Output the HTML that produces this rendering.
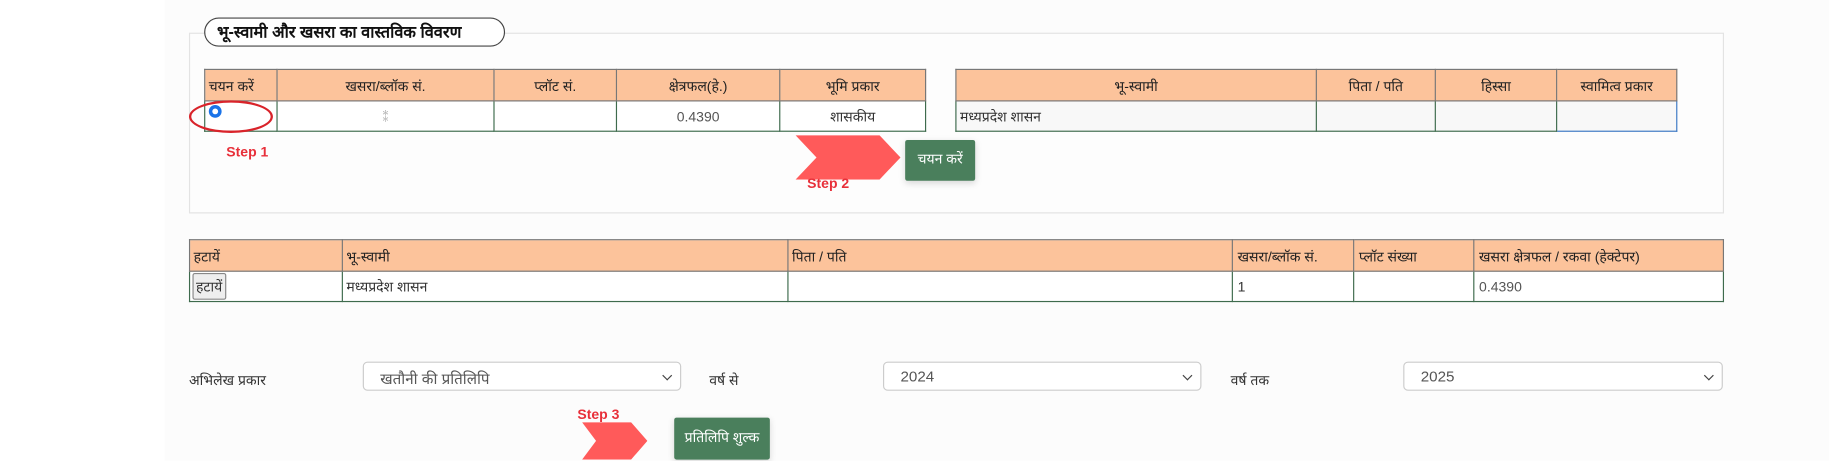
<!DOCTYPE html>
<html><head><meta charset="utf-8"><style>
*{box-sizing:border-box;margin:0;padding:0}
body{width:1829px;height:460px;background:#fff;position:relative;overflow:hidden;font-family:"Liberation Sans","Noto Sans CJK SC",sans-serif;font-size:12px;color:#333}
#w{position:absolute;left:0;top:0;width:1568px;height:395px;transform:scale(1.16645);transform-origin:0 0}
.bg{position:absolute;left:141px;top:0;width:1427px;height:395px;background:#fcfcfc}
.a{position:absolute}
table{border-collapse:collapse;position:absolute;table-layout:fixed}
th{background:#fcc39b;border:1px solid #777;font-weight:normal;color:#222;height:27px;font-size:12px}
td{border:1px solid #3e6b4d;height:26px;background:#fff;font-size:12px}
.fs{left:162px;top:28px;width:1316px;height:155px;border:1px solid #e3e3e3;background:#fdfdfd}
.leg{left:175px;top:15px;width:258px;height:25px;border:1px solid #444;border-radius:13px;background:#fff;font-weight:bold;font-size:14px;padding:2px 0 0 10px;color:#111}
.btn{background:#4a7f5c;color:#fff;border-radius:2px;text-align:center;box-shadow:0 2px 6px rgba(0,0,0,.15)}
.sel{border:1px solid #ccc;border-radius:4px;background:#fff;height:25px;font-size:13px;color:#555;padding:4px 0 0 14px}
.sel:after{content:"";position:absolute;right:8px;top:8px;width:5px;height:5px;border-right:1.5px solid #444;border-bottom:1.5px solid #444;transform:rotate(45deg)}
.red{color:#e8303a;font-weight:bold;font-size:12px}
</style></head><body><div id="w">
<div class="bg"></div>
<div class="a fs"></div>
<div class="a leg">भू-स्वामी और खसरा का वास्तविक विवरण</div>

<table style="left:175px;top:59px;width:619px">
<tr><th style="width:62px;text-align:left;padding-left:3px">चयन करें</th><th style="width:186px">खसरा/ब्लॉक सं.</th><th style="width:105px">प्लॉट सं.</th><th style="width:140px">क्षेत्रफल(हे.)</th><th>भूमि प्रकार</th></tr>
<tr><td style="vertical-align:top;padding:3px"><span style="display:inline-block;width:11px;height:11px;border-radius:50%;border:3px solid #1a73e8;background:#fff"></span></td><td style="text-align:center;color:#aaa">⁑</td><td></td><td style="text-align:center;color:#555">0.4390</td><td style="text-align:center">शासकीय</td></tr>
</table>
<div class="a" style="left:162px;top:86px;width:72px;height:28px;border:2px solid #d9232a;border-radius:50%"></div>
<div class="a red" style="left:194px;top:123px">Step 1</div>

<table style="left:819px;top:59px;width:619px">
<tr><th style="width:309px">भू-स्वामी</th><th style="width:102px">पिता / पति</th><th style="width:104px">हिस्सा</th><th>स्वामित्व प्रकार</th></tr>
<tr><td style="background:#f8f8f8;padding-left:3px">मध्यप्रदेश शासन</td><td style="background:#f8f8f8"></td><td style="background:#f8f8f8"></td><td style="background:#f8f8f8;border-bottom-color:#3b78c4;border-right-color:#3b78c4"></td></tr>
</table>

<svg class="a" style="left:682px;top:116px" width="90" height="38"><polygon points="0,0 72,0 90,19 72,38 0,38 18,19" fill="#ff5a5a"/></svg>
<div class="a red" style="left:692px;top:150px">Step 2</div>
<div class="a btn" style="left:776px;top:120px;width:60px;height:35px;line-height:33px;font-size:12px">चयन करें</div>

<table style="left:162px;top:205px;width:1316px">
<tr><th style="width:131px;text-align:left;padding-left:3px">हटायें</th><th style="width:382px;text-align:left;padding-left:3px">भू-स्वामी</th><th style="width:381px;text-align:left;padding-left:3px">पिता / पति</th><th style="width:104px;text-align:left;padding-left:4px">खसरा/ब्लॉक सं.</th><th style="width:103px;text-align:left;padding-left:4px">प्लॉट संख्या</th><th style="text-align:left;padding-left:4px">खसरा क्षेत्रफल / रकवा (हेक्टेपर)</th></tr>
<tr><td style="padding-left:2px"><span style="display:inline-block;border:1px solid #888;background:#eee;border-radius:2px;padding:2px 2px;font-size:12px">हटायें</span></td><td style="padding-left:3px">मध्यप्रदेश शासन</td><td></td><td style="padding-left:4px">1</td><td></td><td style="padding-left:4px;color:#555">0.4390</td></tr>
</table>

<div class="a" style="left:162px;top:317px">अभिलेख प्रकार</div>
<div class="a sel" style="left:311px;top:310px;width:273px">खतौनी की प्रतिलिपि</div>
<div class="a" style="left:608px;top:317px">वर्ष से</div>
<div class="a sel" style="left:757px;top:310px;width:273px">2024</div>
<div class="a" style="left:1055px;top:317px">वर्ष तक</div>
<div class="a sel" style="left:1203px;top:310px;width:274px">2025</div>

<div class="a red" style="left:495px;top:348px">Step 3</div>
<svg class="a" style="left:499px;top:362px" width="56" height="32"><polygon points="0,0 42,0 56,16 42,32 0,32 12,16" fill="#ff5a5a"/></svg>
<div class="a btn" style="left:578px;top:358px;width:82px;height:36px;line-height:34px;font-size:12px">प्रतिलिपि शुल्क</div>
</div></body></html>
